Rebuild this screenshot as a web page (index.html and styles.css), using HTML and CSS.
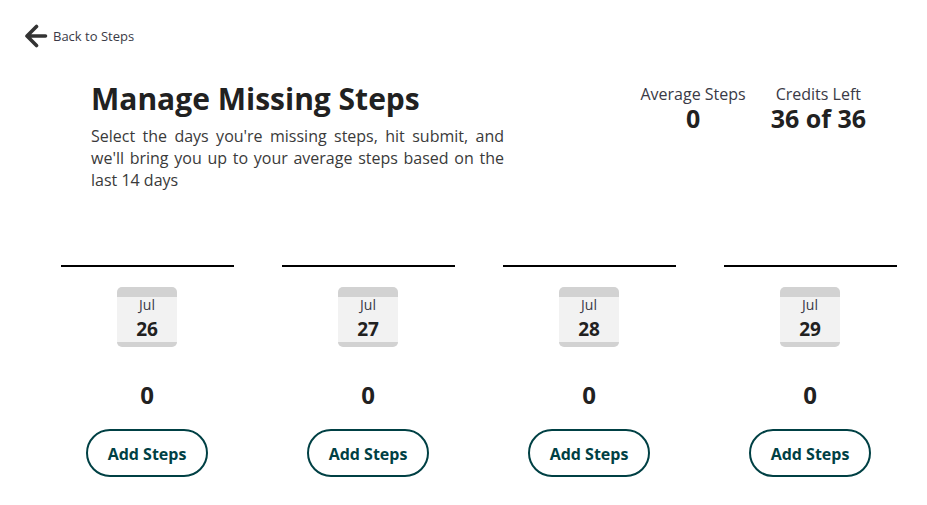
FILE: index.html
```html
<!DOCTYPE html>
<html>
<head>
	<title>Manage Missing Steps</title>
	<link rel="stylesheet" href="styles.css">
</head>
<body>
	<a class="BackLink" href="#">
		<svg class="BackIcon" width="24" height="24" viewBox="0 0 24 24">
			<path d="M20.500 12H3M11.500 2.500L2 12L11.500 21.500" fill="none" stroke="#333" stroke-width="3.600" stroke-linecap="round" stroke-linejoin="round"/>
		</svg>
		<span>Back to Steps</span>
	</a>

	<div class="Header">
		<div class="Intro">
			<h1 class="Title">Manage Missing Steps</h1>
			<p class="Description">Select the days you're missing steps, hit submit, and we'll bring you up to your average steps based on the last 14 days</p>
		</div>
		<div class="Stats">
			<div class="Stat">
				<div class="StatLabel">Average Steps</div>
				<div class="StatValue">0</div>
			</div>
			<div class="Stat">
				<div class="StatLabel">Credits Left</div>
				<div class="StatValue">36 of 36</div>
			</div>
		</div>
	</div>

	<div class="Days">
		<div class="Day">
			<div class="Calendar">
				<div class="Month">Jul</div>
				<div class="Date">26</div>
			</div>
			<div class="StepCount">0</div>
			<button class="AddButton">Add Steps</button>
		</div>
		<div class="Day">
			<div class="Calendar">
				<div class="Month">Jul</div>
				<div class="Date">27</div>
			</div>
			<div class="StepCount">0</div>
			<button class="AddButton">Add Steps</button>
		</div>
		<div class="Day">
			<div class="Calendar">
				<div class="Month">Jul</div>
				<div class="Date">28</div>
			</div>
			<div class="StepCount">0</div>
			<button class="AddButton">Add Steps</button>
		</div>
		<div class="Day">
			<div class="Calendar">
				<div class="Month">Jul</div>
				<div class="Date">29</div>
			</div>
			<div class="StepCount">0</div>
			<button class="AddButton">Add Steps</button>
		</div>
	</div>
</body>
</html>
```

FILE: styles.css
```css
body {
	margin: 0;
	height: 505px;
	overflow: hidden;
	background-color: white;
	color: #212121;
	font-family: "Open Sans", sans-serif;
}

.BackLink {
	display: flex;
	align-items: center;
	gap: 4px;
	padding: 24px 0 0 25px;
	font-size: 13px;
	line-height: 24px;
	color: #3a3a46;
	text-decoration: none;
}

.Header {
	display: flex;
	justify-content: space-between;
	margin-top: 29px;
	padding: 0 61px 0 91px;
}

.Intro {
	width: 413px;
}

.Title {
	margin: 0;
	font-size: 30px;
	line-height: 44px;
	font-weight: 700;
}

.Description {
	margin: 4px 0 0 0;
	font-size: 16px;
	line-height: 22px;
	text-align: justify;
	color: #3a3a3a;
}

.Stats {
	display: flex;
	gap: 25px;
	padding-top: 7px;
}

.Stat {
	text-align: center;
}

.StatLabel {
	font-size: 16px;
	line-height: 20px;
	color: #3a3a46;
}

.StatValue {
	font-size: 25px;
	line-height: 28px;
	font-weight: 700;
}

.Days {
	display: flex;
	gap: 48px;
	margin-top: 74px;
	padding-left: 61px;
}

.Day {
	display: flex;
	flex-direction: column;
	align-items: center;
	box-sizing: border-box;
	width: 173px;
	padding-right: 1px;
	border-top: 2px solid black;
}

.Calendar {
	width: 60px;
	height: 60px;
	box-sizing: border-box;
	margin-top: 20px;
	border-top: 10px solid #d2d2d2;
	border-bottom: 5px solid #d2d2d2;
	border-radius: 5px;
	background-color: #f2f2f2;
	text-align: center;
}

.Month {
	font-size: 14px;
	line-height: 16px;
	color: #3a3a46;
}

.Date {
	margin-top: 3px;
	font-size: 19px;
	line-height: 26px;
	font-weight: 700;
}

.StepCount {
	margin-top: 31px;
	font-size: 24px;
	line-height: 33px;
	font-weight: 700;
}

.AddButton {
	width: 122px;
	height: 48px;
	margin-top: 18px;
	padding: 2px 0 0 0;
	border: 2px solid #004044;
	border-radius: 24px;
	background-color: white;
	color: #004044;
	font-family: "Open Sans", sans-serif;
	font-size: 16px;
	font-weight: 700;
}
```
